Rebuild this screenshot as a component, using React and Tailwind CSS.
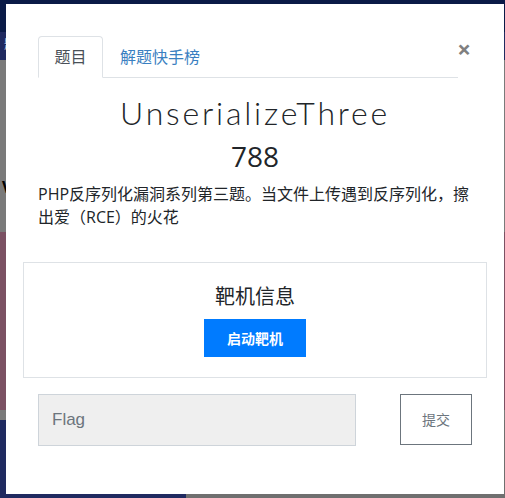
import React from 'react';

const cjk = { fontFamily: '"Open Sans", "Noto Sans CJK SC", sans-serif' };

const Backdrop = () => (
  <div className="flex h-[498px] w-[505px] flex-col bg-[#6f6f6f]">
    <div className="h-[32px] bg-[#0a1a47]" />
    <div className="h-[28px] bg-[#202a60] pl-1 pt-1 text-[12px] text-[#c8cbe0]" style={cjk}>题</div>
    <div className="h-[172px] bg-[#7a7a7a]">
      <div className="pl-[2px] pt-[115px] text-[16px] font-bold text-black">V</div>
    </div>
    <div className="h-[178px] bg-[#7b5163]" />
    <div className="h-[10px] bg-[#7a7a7a]" />
    <div className="flex flex-1">
      <div className="w-[186px] bg-[#1f2a60]" />
      <div className="flex-1 bg-[#6f6f6f]" />
    </div>
  </div>
);

const Modal = () => (
  <div className="absolute left-[6px] top-[4px] flex h-[490px] w-[498px] flex-col bg-white" style={cjk}>
    <div className="relative flex pl-[32px] pr-[46px] pt-[32px]">
      <div className="flex flex-1 border-b border-[#dee2e6]">
        <div className="-mb-px flex h-[42px] w-[65px] items-center justify-center rounded-t border border-b-white border-[#dee2e6] text-[16px] text-[#495057]">
          题目
        </div>
        <div className="flex h-[41px] items-center px-[17px] text-[16px] text-[#3a7fc1]">解题快手榜</div>
      </div>
      <div className="absolute right-[33px] top-[33px] text-[24px] font-bold leading-none text-[#808080]">×</div>
    </div>

    <div className="flex flex-col items-center pt-[14px]">
      <div className="text-[32px] font-light leading-[42px] tracking-[2.8px] text-[#212529]" style={{ fontFamily: 'Lato, sans-serif' }}>
        UnserializeThree
      </div>
      <div className="pt-[3px] text-[28px] leading-[38px] text-[#212529]">788</div>
    </div>

    <div className="pl-[32px] pr-[26px] pt-[8px] text-[16px] leading-[23px] text-[#212529]">
      PHP反序列化漏洞系列第三题。当文件上传遇到反序列化，擦出爱（RCE）的火花
    </div>

    <div className="mx-[17px] mt-[33px] flex h-[116px] flex-col items-center border border-[#dee2e6] pt-[20px]">
      <div className="text-[20px] leading-[28px] text-[#212529]">靶机信息</div>
      <div className="mt-[8px] flex h-[38px] w-[102px] items-center justify-center bg-[#007bff] text-[14px] font-bold text-white">
        启动靶机
      </div>
    </div>

    <div className="flex items-start justify-between px-[32px] pt-[16px]">
      <div
        className="flex h-[52px] w-[318px] items-center border border-[#ced4da] bg-[#efefef] px-[13px] text-[17px] text-[#6c757d]"
        style={{ fontFamily: '"Liberation Sans", Arial, sans-serif' }}
      >
        Flag
      </div>
      <div className="flex h-[51px] w-[72px] items-center justify-center border border-[#6c757d] text-[14px] text-[#6c757d]">
        提交
      </div>
    </div>
  </div>
);

export default function App() {
  return (
    <div className="relative h-[498px] w-[505px] overflow-hidden">
      <Backdrop />
      <Modal />
    </div>
  );
}
